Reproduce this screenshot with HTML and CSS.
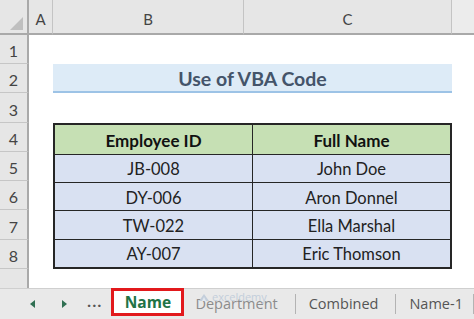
FILE: index.html
```html
<!DOCTYPE html>
<html lang="en">
<head>
  <meta charset="UTF-8">
  <meta name="viewport" content="width=device-width, initial-scale=1.0">
  <title>Use of VBA Code</title>
  <link rel="stylesheet" href="styles.css">
</head>
<body>
  <div class="sheet">
    <!-- column headers -->
    <div class="corner"><span class="corner-tri"></span></div>
    <div class="col-head">A</div>
    <div class="col-head">B</div>
    <div class="col-head">C</div>
    <div class="col-head col-rest"></div>

    <!-- row headers -->
    <div class="row-head r1">1</div>
    <div class="row-head r2">2</div>
    <div class="row-head r3">3</div>
    <div class="row-head r4">4</div>
    <div class="row-head r5">5</div>
    <div class="row-head r6">6</div>
    <div class="row-head r7">7</div>
    <div class="row-head r8">8</div>
    <div class="row-head r9"></div>

    <div class="title-band">Use of VBA Code</div>

    <table class="data">
      <tr><th>Employee ID</th><th>Full Name</th></tr>
      <tr><td>JB-008</td><td>John Doe</td></tr>
      <tr><td>DY-006</td><td>Aron Donnel</td></tr>
      <tr><td>TW-022</td><td>Ella Marshal</td></tr>
      <tr><td>AY-007</td><td>Eric Thomson</td></tr>
    </table>
  </div>

  <div class="tabs">
    <span class="nav-arrow left"></span>
    <span class="nav-arrow right"></span>
    <span class="dots">...</span>
    <span class="tab active">Name</span>
    <span class="tab faded">Department</span>
    <span class="tab">Combined</span>
    <span class="tab last">Name-1</span>
    <span class="watermark">
      <svg width="12" height="10" viewBox="0 0 12 10"><path d="M1 9 L6 2 L11 9 Z" fill="#c3cedb"/><path d="M4 9 L6 5 L8 9 Z" fill="#e3e9f0"/></svg>
      exceldemy
    </span>
  </div>
</body>
</html>
```

FILE: styles.css
```css
body {
  margin: 0;
  width: 474px;
  height: 319px;
  overflow: hidden;
  background: #fff;
  font-family: Lato, "Open Sans", sans-serif;
}

.sheet {
  display: grid;
  grid-template-columns: 29px 24px 191px 208px 1fr;
  grid-template-rows: 35px 29px 29px 30px 29px 29px 29px 30px 29px 19px;
  height: 288px;
}

/* header strip */
.corner,
.col-head {
  background: #e6e6e6;
  border-bottom: 2px solid #a9a9a9;
  box-sizing: border-box;
}

.corner {
  position: relative;
  border-right: 2px solid #a9a9a9;
}

.corner-tri {
  position: absolute;
  right: 4px;
  bottom: 3px;
  width: 0;
  height: 0;
  border-left: 13px solid transparent;
  border-bottom: 13px solid #bfbfbf;
}

.col-head {
  display: flex;
  align-items: flex-end;
  justify-content: center;
  padding-bottom: 5px;
  font-size: 15px;
  color: #444;
  border-right: 1px solid #c4c4c4;
}

.col-rest {
  background: #ececec;
  border-right: none;
}

/* row numbers */
.row-head {
  grid-column: 1;
  display: flex;
  align-items: center;
  justify-content: center;
  background: #e6e6e6;
  border-right: 2px solid #a9a9a9;
  border-bottom: 1px solid #c6c6c6;
  box-sizing: border-box;
  font-size: 16px;
  color: #444;
  padding-top: 3px;
}

.r1 { grid-row: 2; }
.r2 { grid-row: 3; }
.r3 { grid-row: 4; }
.r4 { grid-row: 5; }
.r5 { grid-row: 6; }
.r6 { grid-row: 7; }
.r7 { grid-row: 8; }
.r8 { grid-row: 9; }
.r9 { grid-row: 10; border-bottom: none; }

.title-band {
  grid-row: 3;
  grid-column: 3 / 5;
  display: flex;
  align-items: center;
  justify-content: center;
  background: #ddebf7;
  border-bottom: 2px solid #9dc3e6;
  font-size: 19.5px;
  font-weight: bold;
  color: #44546a;
  padding-top: 2px;
}

.data {
  grid-row: 5 / 10;
  grid-column: 3 / 5;
  width: 100%;
  height: 100%;
  border-collapse: collapse;
  border: 2px solid #262626;
  font-size: 16.5px;
  color: #222;
}

.data th,
.data td {
  border: 1.5px solid #262626;
  text-align: center;
  padding: 2px 0 0;
  width: 50%;
}

.data th {
  background: #c6e0b4;
  color: #111;
  font-weight: bold;
  font-size: 17px;
}

.data td {
  background: #d9e1f2;
}

/* sheet tabs */
.tabs {
  position: relative;
  display: flex;
  align-items: center;
  height: 31px;
  background: #e9e9e9;
  border-top: 1px solid #cfcfcf;
  box-sizing: border-box;
  font-family: "Open Sans", sans-serif;
  font-size: 14.5px;
  color: #555;
  white-space: nowrap;
}

.nav-arrow {
  flex-shrink: 0;
  width: 0;
  height: 0;
  border-top: 4px solid transparent;
  border-bottom: 4px solid transparent;
}

.nav-arrow.left {
  margin-left: 30px;
  border-right: 5px solid #2f6f52;
}

.nav-arrow.right {
  margin-left: 27px;
  border-left: 5px solid #2f6f52;
}

.dots {
  margin-left: 20px;
  font-weight: bold;
  color: #555;
  letter-spacing: 1px;
  padding-bottom: 6px;
}

.tab {
  flex-shrink: 0;
  padding: 0 17px 0 13px;
  border-right: 1px solid #b3b3b3;
  line-height: 20px;
}

.tab.active {
  margin-left: 9px;
  width: 73px;
  height: 28px;
  box-sizing: border-box;
  display: flex;
  align-items: center;
  justify-content: center;
  padding: 0;
  background: #fff;
  border: 3px solid #e2191c;
  color: #217346;
  font-weight: bold;
  font-size: 15.5px;
  margin-right: 11px;
  align-self: flex-end;
  margin-bottom: 3px;
}

.tab.faded {
  color: #8c8c8c;
  padding-left: 0;
}

.tab.last {
  padding-right: 10px;
}

.watermark {
  position: absolute;
  left: 198px;
  top: 0;
  display: flex;
  align-items: center;
  gap: 2px;
  font-size: 11px;
  color: #c3cedb;
}
```
